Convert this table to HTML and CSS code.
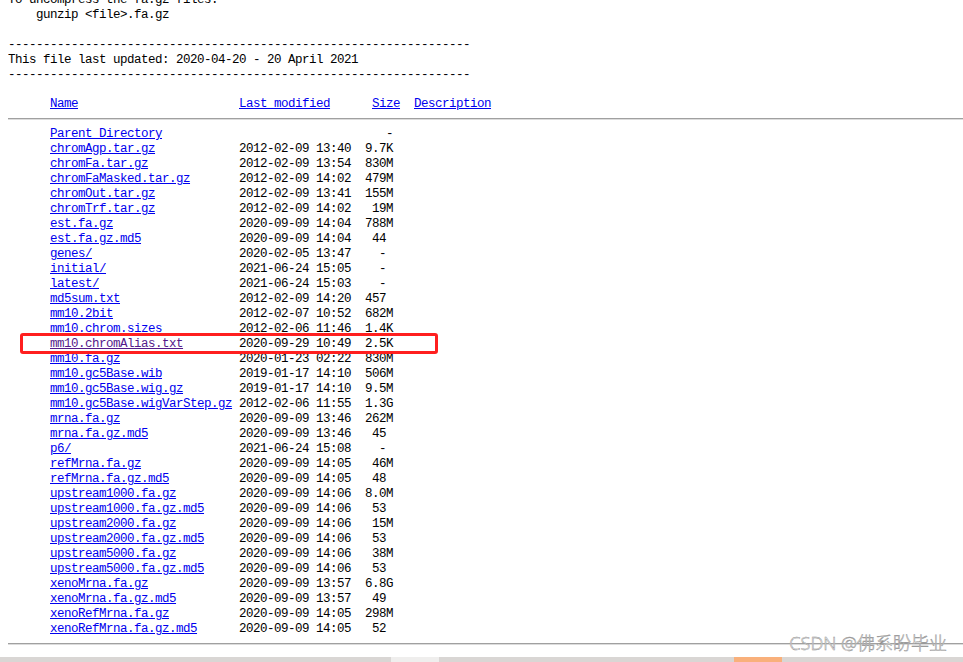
FILE: index.html
```html
<!DOCTYPE html>
<html>
<head>
<meta charset="utf-8">
<title>Index of /goldenPath/mm10/bigZips</title>
<link rel="stylesheet" href="styles.css">
</head>
<body>
<div class="page">
<pre class="readme">To uncompress the fa.gz files:
    gunzip &lt;file&gt;.fa.gz

------------------------------------------------------------------
This file last updated: 2020-04-20 - 20 April 2021
------------------------------------------------------------------</pre>

<div class="listing">
  <div class="row head">
    <span class="name"><a href="#">Name</a></span>
    <span class="hdate"><a href="#">Last modified</a></span>
    <span class="hsize"><a href="#">Size</a></span>
    <span class="desc"><a href="#">Description</a></span>
  </div>
  <hr class="rule">
  <div class="row"><span class="name"><a href="#">Parent Directory</a></span><span class="date"></span><span class="size">-</span></div>
  <div class="row"><span class="name"><a href="#">chromAgp.tar.gz</a></span><span class="date">2012-02-09 13:40</span><span class="size">9.7K</span></div>
  <div class="row"><span class="name"><a href="#">chromFa.tar.gz</a></span><span class="date">2012-02-09 13:54</span><span class="size">830M</span></div>
  <div class="row"><span class="name"><a href="#">chromFaMasked.tar.gz</a></span><span class="date">2012-02-09 14:02</span><span class="size">479M</span></div>
  <div class="row"><span class="name"><a href="#">chromOut.tar.gz</a></span><span class="date">2012-02-09 13:41</span><span class="size">155M</span></div>
  <div class="row"><span class="name"><a href="#">chromTrf.tar.gz</a></span><span class="date">2012-02-09 14:02</span><span class="size"> 19M</span></div>
  <div class="row"><span class="name"><a href="#">est.fa.gz</a></span><span class="date">2020-09-09 14:04</span><span class="size">788M</span></div>
  <div class="row"><span class="name"><a href="#">est.fa.gz.md5</a></span><span class="date">2020-09-09 14:04</span><span class="size"> 44 </span></div>
  <div class="row"><span class="name"><a href="#">genes/</a></span><span class="date">2020-02-05 13:47</span><span class="size">  - </span></div>
  <div class="row"><span class="name"><a href="#">initial/</a></span><span class="date">2021-06-24 15:05</span><span class="size">  - </span></div>
  <div class="row"><span class="name"><a href="#">latest/</a></span><span class="date">2021-06-24 15:03</span><span class="size">  - </span></div>
  <div class="row"><span class="name"><a href="#">md5sum.txt</a></span><span class="date">2012-02-09 14:20</span><span class="size">457 </span></div>
  <div class="row"><span class="name"><a href="#">mm10.2bit</a></span><span class="date">2012-02-07 10:52</span><span class="size">682M</span></div>
  <div class="row"><span class="name"><a href="#">mm10.chrom.sizes</a></span><span class="date">2012-02-06 11:46</span><span class="size">1.4K</span></div>
  <div class="row"><span class="name"><a href="#" class="visited">mm10.chromAlias.txt</a></span><span class="date">2020-09-29 10:49</span><span class="size">2.5K</span></div>
  <div class="row"><span class="name"><a href="#">mm10.fa.gz</a></span><span class="date">2020-01-23 02:22</span><span class="size">830M</span></div>
  <div class="row"><span class="name"><a href="#">mm10.gc5Base.wib</a></span><span class="date">2019-01-17 14:10</span><span class="size">506M</span></div>
  <div class="row"><span class="name"><a href="#">mm10.gc5Base.wig.gz</a></span><span class="date">2019-01-17 14:10</span><span class="size">9.5M</span></div>
  <div class="row"><span class="name"><a href="#">mm10.gc5Base.wigVarStep.gz</a></span><span class="date">2012-02-06 11:55</span><span class="size">1.3G</span></div>
  <div class="row"><span class="name"><a href="#">mrna.fa.gz</a></span><span class="date">2020-09-09 13:46</span><span class="size">262M</span></div>
  <div class="row"><span class="name"><a href="#">mrna.fa.gz.md5</a></span><span class="date">2020-09-09 13:46</span><span class="size"> 45 </span></div>
  <div class="row"><span class="name"><a href="#">p6/</a></span><span class="date">2021-06-24 15:08</span><span class="size">  - </span></div>
  <div class="row"><span class="name"><a href="#">refMrna.fa.gz</a></span><span class="date">2020-09-09 14:05</span><span class="size"> 46M</span></div>
  <div class="row"><span class="name"><a href="#">refMrna.fa.gz.md5</a></span><span class="date">2020-09-09 14:05</span><span class="size"> 48 </span></div>
  <div class="row"><span class="name"><a href="#">upstream1000.fa.gz</a></span><span class="date">2020-09-09 14:06</span><span class="size">8.0M</span></div>
  <div class="row"><span class="name"><a href="#">upstream1000.fa.gz.md5</a></span><span class="date">2020-09-09 14:06</span><span class="size"> 53 </span></div>
  <div class="row"><span class="name"><a href="#">upstream2000.fa.gz</a></span><span class="date">2020-09-09 14:06</span><span class="size"> 15M</span></div>
  <div class="row"><span class="name"><a href="#">upstream2000.fa.gz.md5</a></span><span class="date">2020-09-09 14:06</span><span class="size"> 53 </span></div>
  <div class="row"><span class="name"><a href="#">upstream5000.fa.gz</a></span><span class="date">2020-09-09 14:06</span><span class="size"> 38M</span></div>
  <div class="row"><span class="name"><a href="#">upstream5000.fa.gz.md5</a></span><span class="date">2020-09-09 14:06</span><span class="size"> 53 </span></div>
  <div class="row"><span class="name"><a href="#">xenoMrna.fa.gz</a></span><span class="date">2020-09-09 13:57</span><span class="size">6.8G</span></div>
  <div class="row"><span class="name"><a href="#">xenoMrna.fa.gz.md5</a></span><span class="date">2020-09-09 13:57</span><span class="size"> 49 </span></div>
  <div class="row"><span class="name"><a href="#">xenoRefMrna.fa.gz</a></span><span class="date">2020-09-09 14:05</span><span class="size">298M</span></div>
  <div class="row"><span class="name"><a href="#">xenoRefMrna.fa.gz.md5</a></span><span class="date">2020-09-09 14:05</span><span class="size"> 52 </span></div>
  <hr class="rule rule-end">
</div>
</div>

<div class="highlight"></div>
<div class="watermark">CSDN @佛系盼毕业</div>
<div class="strip">
  <span class="seg seg-a"></span>
  <span class="seg seg-light"></span>
  <span class="seg seg-b"></span>
  <span class="seg seg-orange"></span>
  <span class="seg seg-c"></span>
</div>
</body>
</html>
```

FILE: styles.css
```css
html, body {
  margin: 0;
  padding: 0;
  background: #ffffff;
}

body {
  margin: 0 0 0 8px;
  overflow: hidden;
  height: 662px;
  font-family: "Liberation Mono", "DejaVu Sans Mono", monospace;
  font-size: 12.5px;
  letter-spacing: -0.5px;
  line-height: 15px;
  color: #000;
}

.page {
  margin-top: -7px;
}

.readme {
  margin: 0 0 14px 0;
  font: inherit;
  line-height: 15px;
  white-space: pre;
}

a {
  color: #0000ee;
  text-decoration: underline;
}

a.visited {
  color: #551a8b;
}

.listing {
  display: flex;
  flex-direction: column;
}

.row {
  display: flex;
  height: 15px;
  line-height: 15px;
  padding-left: 42px;
  white-space: pre;
}

.name {
  width: 189px;
  flex: none;
}

.date {
  width: 112px;
  flex: none;
}

.size {
  width: 42px;
  flex: none;
  text-align: right;
}

.hdate {
  width: 133px;
  flex: none;
}

.hsize {
  width: 42px;
  flex: none;
}

.rule {
  height: 0;
  border: 0;
  border-top: 1px solid #a0a0a0;
  border-bottom: 1px solid #dcdcdc;
  margin: 6px 0 7px 0;
}

.rule-end {
  margin-top: 6px;
}

.highlight {
  position: absolute;
  left: 20px;
  top: 333px;
  width: 418px;
  height: 21px;
  box-sizing: border-box;
  border: 3px solid #ff1f1f;
  border-radius: 3px;
}

.watermark {
  position: absolute;
  right: 16px;
  top: 631px;
  height: 24px;
  line-height: 24px;
  font-family: "Noto Sans", "Noto Sans CJK SC", sans-serif;
  font-size: 18px;
  font-weight: 300;
  letter-spacing: 0;
  color: #f7f7f7;
  -webkit-text-stroke: 0.45px #8a8a8a;
}

.strip {
  position: fixed;
  left: 0;
  right: 0;
  bottom: 0;
  height: 5px;
  display: flex;
}

.seg {
  display: block;
  height: 100%;
}

.seg-a {
  width: 391px;
  background: #d9d6d4;
}

.seg-light {
  width: 48px;
  background: #efeeed;
}

.seg-b {
  width: 295px;
  background: #d9d6d4;
}

.seg-orange {
  width: 48px;
  background: #f9b07b;
}

.seg-c {
  flex: 1;
  background: #d9d6d4;
}
```
